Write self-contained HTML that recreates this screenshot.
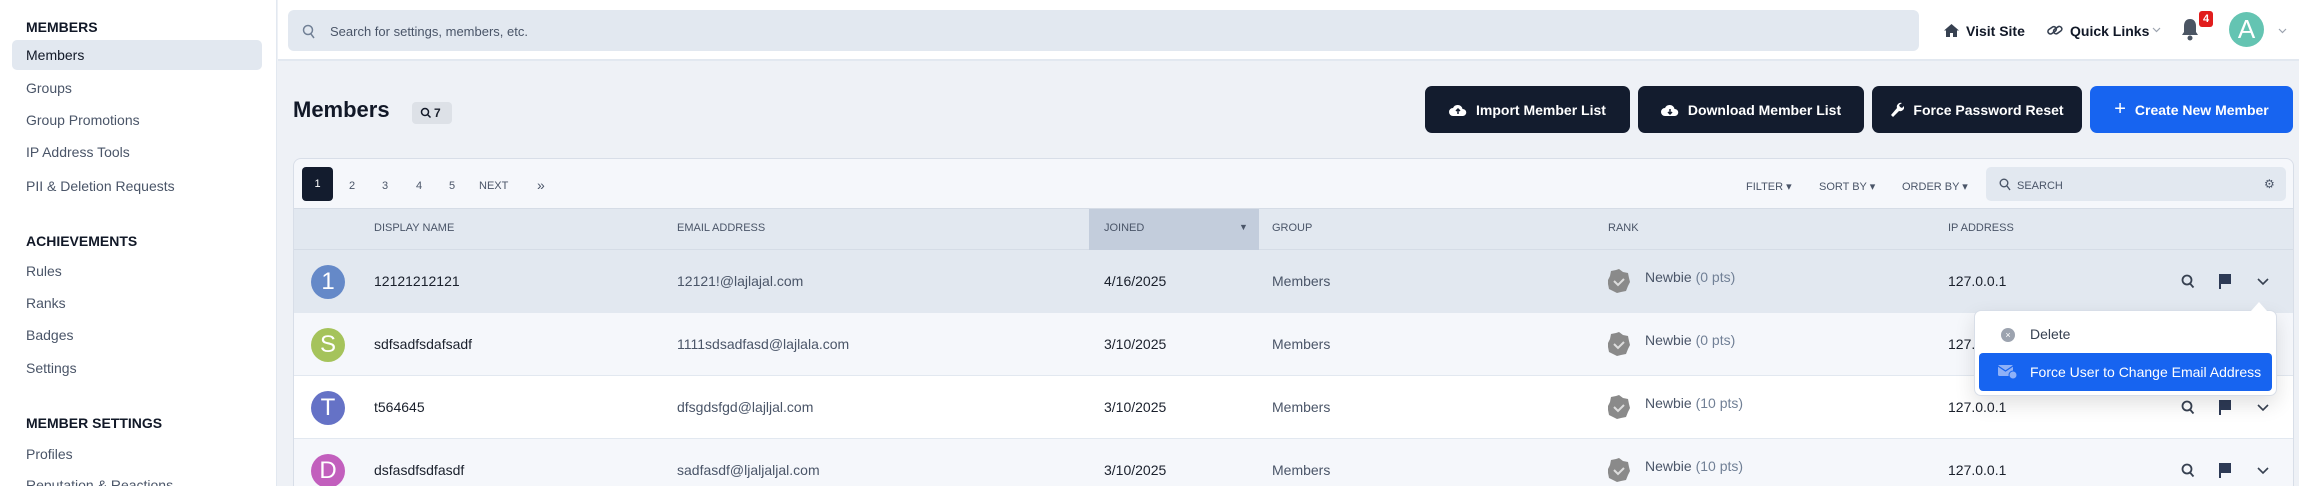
<!DOCTYPE html>
<html style="overflow:hidden;height:486px"><head><meta charset="utf-8"><style>
*{box-sizing:border-box;margin:0;padding:0}
html,body{overflow:hidden}
body{width:2299px;height:486px;background:#eef1f6;font-family:"Liberation Sans",sans-serif;position:relative;color:#1a202c}
.a{position:absolute;white-space:nowrap}
.side{position:absolute;left:0;top:0;width:277px;height:486px;background:#fff;border-right:1px solid #e2e8f0}
.sh{font-weight:bold;font-size:14px;color:#111827;left:26px}
.si{font-size:14px;color:#4a5568;left:26px}
.top{position:absolute;left:278px;top:0;right:0;height:61px;background:#fff;border-bottom:2px solid #e2e8f0}
.btn{position:absolute;top:86px;height:47px;border-radius:7px;background:#131c2e;color:#fff;font-size:14px;font-weight:bold;display:flex;align-items:center;justify-content:center;gap:9px}
.card{position:absolute;left:293px;top:158px;width:2001px;height:328px;background:#f5f7fb;border:1px solid #d8dee8;border-bottom:none;border-radius:8px 8px 0 0;overflow:hidden}
.hd{position:absolute;left:0;top:49px;width:100%;height:42px;background:#e2e8f0;border-top:1px solid #d5dce6;border-bottom:1px solid #d5dce6}
.ht{font-size:11px;color:#4a5568;top:13px}
.row{position:absolute;left:0;width:100%;height:63px;border-bottom:1px solid #e2e8f0}
.av{position:absolute;left:17px;top:15px;width:34px;height:34px;border-radius:50%;color:#fff;font-size:24px;text-align:center;line-height:34px}
.c{position:absolute;top:23px;font-size:14px;white-space:nowrap}
.pg{font-size:11px;color:#4a5568;top:21px}
</style></head><body>
<div class="side">
<div class="a sh" style="top:19px">MEMBERS</div>
<div class="a" style="left:12px;top:40px;width:250px;height:30px;background:#e2e8f0;border-radius:5px"></div>
<div class="a si" style="top:47px;color:#111827">Members</div>
<div class="a si" style="top:80px">Groups</div>
<div class="a si" style="top:112px">Group Promotions</div>
<div class="a si" style="top:144px">IP Address Tools</div>
<div class="a si" style="top:178px">PII &amp; Deletion Requests</div>
<div class="a sh" style="top:233px">ACHIEVEMENTS</div>
<div class="a si" style="top:263px">Rules</div>
<div class="a si" style="top:295px">Ranks</div>
<div class="a si" style="top:327px">Badges</div>
<div class="a si" style="top:360px">Settings</div>
<div class="a sh" style="top:415px">MEMBER SETTINGS</div>
<div class="a si" style="top:446px">Profiles</div>
<div class="a si" style="top:477px">Reputation &amp; Reactions</div>
</div>
<div class="top"></div>
<div class="a" style="left:288px;top:10px;width:1631px;height:41px;background:#e2e8f0;border-radius:6px"></div>
<svg class="a" style="left:302px;top:24px" width="14" height="16" viewBox="0 0 14 16"><circle cx="6" cy="6" r="4.5" fill="none" stroke="#718096" stroke-width="1.5"/><path d="M9 10l3 4" stroke="#718096" stroke-width="1.5"/></svg>
<div class="a" style="left:330px;top:24px;font-size:13px;color:#4a5568">Search for settings, members, etc.</div>
<svg class="a" style="left:1944px;top:24px" width="15" height="13" viewBox="0 0 15 13"><path d="M7.5 0L0 6.5h2V13h4V9h3v4h4V6.5h2z" fill="#374151"/></svg>
<div class="a" style="left:1966px;top:23px;font-size:14px;font-weight:bold;color:#111827">Visit Site</div>
<svg class="a" style="left:2047px;top:23px" width="16" height="15" viewBox="0 0 16 15"><g fill="none" stroke="#374151" stroke-width="1.6"><rect x="1" y="5" width="9" height="5" rx="2.5" transform="rotate(-35 5 8)"/><rect x="6" y="5" width="9" height="5" rx="2.5" transform="rotate(-35 10 7)"/></g></svg>
<div class="a" style="left:2070px;top:23px;font-size:14px;font-weight:bold;color:#111827">Quick Links</div>
<svg class="a" style="left:2152px;top:27px" width="9" height="6" viewBox="0 0 9 6"><path d="M1 1l3.5 3.5L8 1" stroke="#9ca3af" stroke-width="1.2" fill="none"/></svg>
<svg class="a" style="left:2180px;top:18px" width="20" height="24" viewBox="0 0 20 24"><path d="M10 1c-4 0-6 3-6 7v6l-2 3h16l-2-3V8c0-4-2-7-6-7z" fill="#4b5563"/><circle cx="10" cy="20" r="2.5" fill="#4b5563"/></svg>
<div class="a" style="left:2199px;top:11px;width:14px;height:16px;background:#e11d1d;border-radius:3px;color:#fff;font-size:11px;font-weight:bold;text-align:center;line-height:16px">4</div>
<div class="a" style="left:2229px;top:12px;width:35px;height:35px;border-radius:50%;background:#64c4b2;color:#fff;font-size:26px;text-align:center;line-height:35px">A</div>
<svg class="a" style="left:2278px;top:28px" width="9" height="6" viewBox="0 0 9 6"><path d="M1 1l3.5 3.5L8 1" stroke="#9ca3af" stroke-width="1.2" fill="none"/></svg>

<div class="a" style="left:293px;top:97px;font-size:22px;font-weight:bold;color:#111827">Members</div>
<div class="a" style="left:412px;top:102px;width:40px;height:22px;background:#dde1e7;border-radius:4px"></div>
<svg class="a" style="left:420px;top:107px" width="12" height="12" viewBox="0 0 12 12"><circle cx="5" cy="5" r="3.5" fill="none" stroke="#111827" stroke-width="1.5"/><path d="M7.5 7.5l3 3" stroke="#111827" stroke-width="1.5"/></svg>
<div class="a" style="left:434px;top:106px;font-size:12px;font-weight:bold">7</div>

<div class="btn" style="left:1425px;width:205px"><svg width="18" height="14" viewBox="0 0 18 14"><path d="M4 13a4 4 0 010-8 5 5 0 019.5 1A3.5 3.5 0 0114 13z" fill="#fff"/><path d="M9 11V6M7 8l2-2 2 2" stroke="#131c2e" stroke-width="1.5" fill="none"/></svg>Import Member List</div>
<div class="btn" style="left:1638px;width:226px"><svg width="18" height="14" viewBox="0 0 18 14"><path d="M4 13a4 4 0 010-8 5 5 0 019.5 1A3.5 3.5 0 0114 13z" fill="#fff"/><path d="M9 6v5M7 9l2 2 2-2" stroke="#131c2e" stroke-width="1.5" fill="none"/></svg>Download Member List</div>
<div class="btn" style="left:1872px;width:210px"><svg width="14" height="16" viewBox="0 0 14 16"><path d="M12 1a4 4 0 00-5 5L1 13l2 2 6-6a4 4 0 005-5l-2 2-2-1-1-2z" fill="#fff"/></svg>Force Password Reset</div>
<div class="btn" style="left:2090px;width:203px;background:#1764f0"><span style="font-size:20px;font-weight:normal">+</span>Create New Member</div>

<div class="card">
<div class="a" style="left:8px;top:8px;width:31px;height:34px;background:#131c2e;border-radius:4px;color:#fff;font-size:11px;text-align:center;line-height:34px">1</div>
<div class="a pg" style="left:55px">2</div><div class="a pg" style="left:88px">3</div><div class="a pg" style="left:122px">4</div><div class="a pg" style="left:155px">5</div><div class="a pg" style="left:185px">NEXT</div><div class="a pg" style="left:243px;font-size:14px;top:18px">&#187;</div>
<div class="a pg" style="left:1452px">FILTER &#9662;</div><div class="a pg" style="left:1525px">SORT BY &#9662;</div><div class="a pg" style="left:1608px">ORDER BY &#9662;</div>
<div class="a" style="left:1692px;top:8px;width:300px;height:34px;background:#e2e8f0;border-radius:5px"></div>
<svg class="a" style="left:1705px;top:19px" width="12" height="13" viewBox="0 0 12 13"><circle cx="5" cy="5" r="3.8" fill="none" stroke="#4a5568" stroke-width="1.4"/><path d="M8 8l3 4" stroke="#4a5568" stroke-width="1.4"/></svg>
<div class="a pg" style="left:1723px">SEARCH</div>
<div class="a" style="left:1970px;top:18px;font-size:12px;color:#4a5568">&#9881;</div>
<div class="hd">
<div class="a" style="left:795px;top:0;width:170px;height:41px;background:#c3cddc"></div>
<div class="a ht" style="left:80px">DISPLAY NAME</div><div class="a ht" style="left:383px">EMAIL ADDRESS</div><div class="a ht" style="left:810px">JOINED</div><div class="a ht" style="left:945px;font-size:9px">&#9660;</div><div class="a ht" style="left:978px">GROUP</div><div class="a ht" style="left:1314px">RANK</div><div class="a ht" style="left:1654px">IP ADDRESS</div>
</div>
<div class="row" style="top:91px;background:#e2e8f0"><div class="av" style="background:#6589c8">1</div><div class="c" style="left:80px">12121212121</div><div class="c" style="left:383px;color:#4a5568">12121!@lajlajal.com</div><div class="c" style="left:810px">4/16/2025</div><div class="c" style="left:978px;color:#4a5568">Members</div><svg class="a" style="left:1314px;top:19px" width="22" height="24" viewBox="0 0 22 24"><path d="M11 0l4 3 5 1 1 5 1 4-2 4-2 5-5 1-4 1-4-2-4-2-1-5L0 11l2-4 1-5 5-1z" fill="#8a8a8a"/><path d="M6 12l4 4 6-6" stroke="#ddd" stroke-width="2" fill="none"/></svg><div class="c" style="left:1351px;top:19px;color:#4a5568">Newbie <span style="color:#718096">(0 pts)</span></div><div class="c" style="left:1654px">127.0.0.1</div>
<svg class="a" style="left:1887px;top:24px" width="14" height="15" viewBox="0 0 14 15"><circle cx="6" cy="6" r="4.5" fill="none" stroke="#374151" stroke-width="1.8"/><path d="M9 9.5l3.5 4" stroke="#374151" stroke-width="1.8"/></svg><svg class="a" style="left:1925px;top:24px" width="12" height="15" viewBox="0 0 12 15"><path d="M1 0v15M1 1h10v8H1" stroke="#2d3a55" stroke-width="2" fill="#2d3a55"/></svg><svg class="a" style="left:1963px;top:28px" width="12" height="8" viewBox="0 0 12 8"><path d="M1 1l5 5 5-5" stroke="#374151" stroke-width="1.6" fill="none"/></svg></div>
<div class="row" style="top:154px"><div class="av" style="background:#a5c35b">S</div><div class="c" style="left:80px">sdfsadfsdafsadf</div><div class="c" style="left:383px;color:#4a5568">1111sdsadfasd@lajlala.com</div><div class="c" style="left:810px">3/10/2025</div><div class="c" style="left:978px;color:#4a5568">Members</div><svg class="a" style="left:1314px;top:19px" width="22" height="24" viewBox="0 0 22 24"><path d="M11 0l4 3 5 1 1 5 1 4-2 4-2 5-5 1-4 1-4-2-4-2-1-5L0 11l2-4 1-5 5-1z" fill="#8a8a8a"/><path d="M6 12l4 4 6-6" stroke="#ddd" stroke-width="2" fill="none"/></svg><div class="c" style="left:1351px;top:19px;color:#4a5568">Newbie <span style="color:#718096">(0 pts)</span></div><div class="c" style="left:1654px">127.0.0.1</div></div>
<div class="row" style="top:217px;background:#fff"><div class="av" style="background:#6572c6">T</div><div class="c" style="left:80px">t564645</div><div class="c" style="left:383px;color:#4a5568">dfsgdsfgd@lajljal.com</div><div class="c" style="left:810px">3/10/2025</div><div class="c" style="left:978px;color:#4a5568">Members</div><svg class="a" style="left:1314px;top:19px" width="22" height="24" viewBox="0 0 22 24"><path d="M11 0l4 3 5 1 1 5 1 4-2 4-2 5-5 1-4 1-4-2-4-2-1-5L0 11l2-4 1-5 5-1z" fill="#8a8a8a"/><path d="M6 12l4 4 6-6" stroke="#ddd" stroke-width="2" fill="none"/></svg><div class="c" style="left:1351px;top:19px;color:#4a5568">Newbie <span style="color:#718096">(10 pts)</span></div><div class="c" style="left:1654px">127.0.0.1</div>
<svg class="a" style="left:1887px;top:24px" width="14" height="15" viewBox="0 0 14 15"><circle cx="6" cy="6" r="4.5" fill="none" stroke="#374151" stroke-width="1.8"/><path d="M9 9.5l3.5 4" stroke="#374151" stroke-width="1.8"/></svg><svg class="a" style="left:1925px;top:24px" width="12" height="15" viewBox="0 0 12 15"><path d="M1 0v15M1 1h10v8H1" stroke="#2d3a55" stroke-width="2" fill="#2d3a55"/></svg><svg class="a" style="left:1963px;top:28px" width="12" height="8" viewBox="0 0 12 8"><path d="M1 1l5 5 5-5" stroke="#374151" stroke-width="1.6" fill="none"/></svg></div>
<div class="row" style="top:280px"><div class="av" style="background:#c25fbd">D</div><div class="c" style="left:80px">dsfasdfsdfasdf</div><div class="c" style="left:383px;color:#4a5568">sadfasdf@ljaljaljal.com</div><div class="c" style="left:810px">3/10/2025</div><div class="c" style="left:978px;color:#4a5568">Members</div><svg class="a" style="left:1314px;top:19px" width="22" height="24" viewBox="0 0 22 24"><path d="M11 0l4 3 5 1 1 5 1 4-2 4-2 5-5 1-4 1-4-2-4-2-1-5L0 11l2-4 1-5 5-1z" fill="#8a8a8a"/><path d="M6 12l4 4 6-6" stroke="#ddd" stroke-width="2" fill="none"/></svg><div class="c" style="left:1351px;top:19px;color:#4a5568">Newbie <span style="color:#718096">(10 pts)</span></div><div class="c" style="left:1654px">127.0.0.1</div>
<svg class="a" style="left:1887px;top:24px" width="14" height="15" viewBox="0 0 14 15"><circle cx="6" cy="6" r="4.5" fill="none" stroke="#374151" stroke-width="1.8"/><path d="M9 9.5l3.5 4" stroke="#374151" stroke-width="1.8"/></svg><svg class="a" style="left:1925px;top:24px" width="12" height="15" viewBox="0 0 12 15"><path d="M1 0v15M1 1h10v8H1" stroke="#2d3a55" stroke-width="2" fill="#2d3a55"/></svg><svg class="a" style="left:1963px;top:28px" width="12" height="8" viewBox="0 0 12 8"><path d="M1 1l5 5 5-5" stroke="#374151" stroke-width="1.6" fill="none"/></svg></div>
</div>
<div class="a" style="left:1974px;top:310px;width:303px;height:86px;background:#fff;border:1px solid #d8dee8;border-radius:7px;box-shadow:0 8px 20px rgba(0,0,0,.12)"></div>
<div class="a" style="left:2251px;top:302px;width:0;height:0;border-left:8px solid transparent;border-right:8px solid transparent;border-bottom:9px solid #fff"></div>
<div class="a" style="left:2001px;top:328px;width:14px;height:14px;border-radius:50%;background:#9ca3af;color:#fff;font-size:9px;text-align:center;line-height:14px">&#215;</div>
<div class="a" style="left:2030px;top:326px;font-size:14px;color:#374151">Delete</div>
<div class="a" style="left:1979px;top:353px;width:293px;height:38px;background:#1764f0;border-radius:4px"></div>
<svg class="a" style="left:1998px;top:364px" width="20" height="16" viewBox="0 0 20 16"><rect x="0" y="1" width="15" height="11" rx="1.5" fill="#8fb1f7"/><path d="M0 2l7.5 5 7.5-5" stroke="#1764f0" stroke-width="1.2" fill="none"/><circle cx="15" cy="11" r="4" fill="#8fb1f7" stroke="#1764f0"/></svg>
<div class="a" style="left:2030px;top:364px;font-size:14px;color:#fff">Force User to Change Email Address</div>
</body></html>
